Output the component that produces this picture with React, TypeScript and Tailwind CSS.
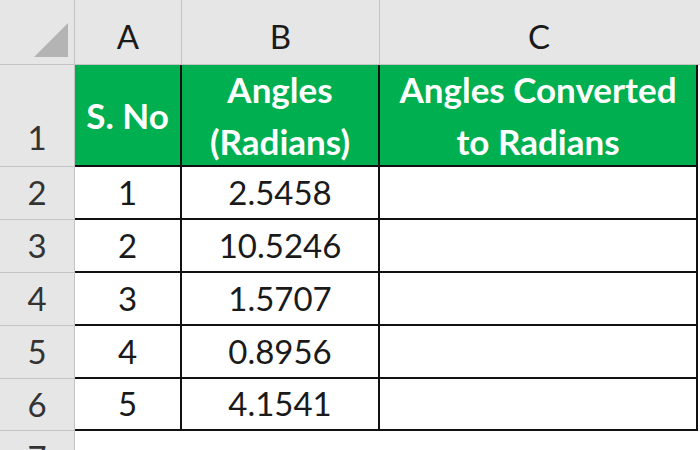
const rows = [
  { n: 2, a: "1", b: "2.5458" },
  { n: 3, a: "2", b: "10.5246" },
  { n: 4, a: "3", b: "1.5707" },
  { n: 5, a: "4", b: "0.8956" },
  { n: 6, a: "5", b: "4.1541" },
];

const font = { fontFamily: "Lato, 'Open Sans', sans-serif" };

export default function App() {
  return (
    <div
      className="w-[700px] h-[450px] overflow-hidden bg-white text-[33px] text-[#1a1a1a]"
      style={font}
    >
      <div className="grid grid-cols-[75px_107px_198px_318px_2px] grid-rows-[65px_102px_53px_53px_53px_53px_52px_40px]">
        {/* column headers */}
        <div className="relative bg-[#e6e6e6] border-r border-b border-[#c4c4c4]">
          <svg className="absolute left-[34px] top-[23px]" width="34" height="34" viewBox="0 0 34 34">
            <polygon points="34,0 34,34 0,34" fill="#b4b4b4" />
          </svg>
        </div>
        <div className="bg-[#e6e6e6] border-r border-b border-[#c4c4c4] flex items-center justify-center pt-[10px]">A</div>
        <div className="bg-[#e6e6e6] border-r border-b border-[#c4c4c4] flex items-center justify-center pt-[10px]">B</div>
        <div className="bg-[#e6e6e6] border-b border-[#c4c4c4] flex items-center justify-center pt-[10px]">C</div>
        <div className="bg-[#e6e6e6] border-b border-[#c4c4c4]" />

        {/* row 1 */}
        <div className="bg-[#e6e6e6] border-r border-b border-[#c4c4c4] flex items-end justify-center pb-[4px] text-[#333]">1</div>
        <div className="bg-[#00b050] border-r-2 border-b-2 border-[#111] flex items-center justify-center font-bold text-white text-[35px]">
          S. No
        </div>
        <div className="bg-[#00b050] border-r-2 border-b-2 border-[#111] flex items-center justify-center text-center font-bold text-white text-[35px] leading-[52px]">
          Angles
          <br />
          (Radians)
        </div>
        <div className="bg-[#00b050] border-r-2 border-b-2 border-[#111] flex items-center justify-center text-center font-bold text-white text-[35px] leading-[52px]">
          Angles Converted
          <br />
          to Radians
        </div>
        <div />

        {rows.map((r) => (
          <Row key={r.n} {...r} />
        ))}

        {/* row 7 */}
        <div className="bg-[#e6e6e6] border-r border-[#c4c4c4] flex items-start justify-center pt-[2px] text-[#333]">7</div>
        <div />
        <div />
        <div />
        <div />
      </div>
    </div>
  );
}

function Row({ n, a, b }: { n: number; a: string; b: string }) {
  return (
    <>
      <div className="bg-[#e6e6e6] border-r border-b border-[#c4c4c4] flex items-center justify-center text-[#333]">
        {n}
      </div>
      <div className="border-r-2 border-b-2 border-[#111] flex items-center justify-center">{a}</div>
      <div className="border-r-2 border-b-2 border-[#111] flex items-center justify-center">{b}</div>
      <div className="border-r-2 border-b-2 border-[#111]" />
      <div />
    </>
  );
}
